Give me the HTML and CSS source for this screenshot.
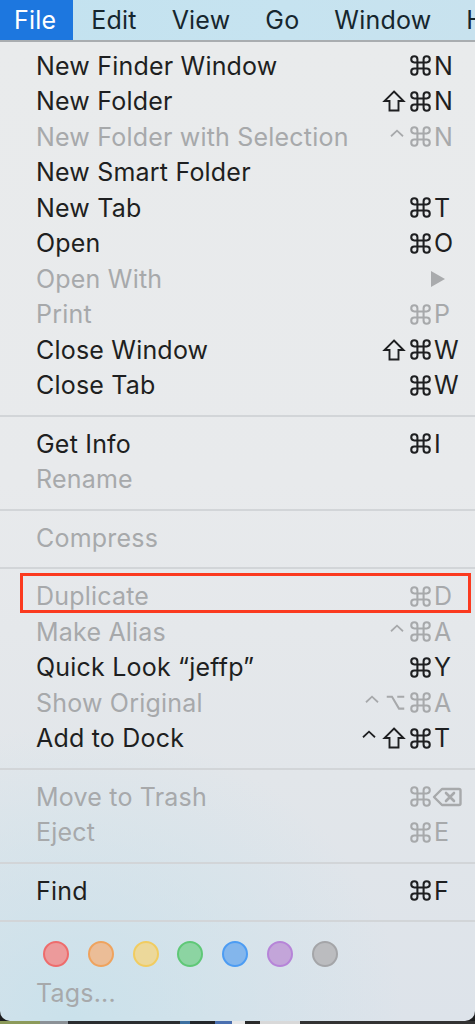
FILE: index.html
```html
<!DOCTYPE html>
<html lang="en">
<head>
<meta charset="utf-8">
<title>File menu</title>
<link rel="stylesheet" href="styles.css">
</head>
<body>
<svg class="defs" width="0" height="0" aria-hidden="true">
  <defs>
    <symbol id="cmd" viewBox="1.8 1.8 20.4 20.4"><path d="M15 6v12a3 3 0 1 0 3-3H6a3 3 0 1 0 3 3V6a3 3 0 1 0-3 3h12a3 3 0 1 0-3-3" fill="none" stroke="currentColor" stroke-width="2"/></symbol>
    <symbol id="shift" viewBox="0 0 24 24"><path d="M12 2.5 L21.5 12 H16.5 V21.5 H7.5 V12 H2.5 Z" fill="none" stroke="currentColor" stroke-width="1.9" stroke-linejoin="miter"/></symbol>
    <symbol id="ctrl" viewBox="0 0 24 24"><path d="M4 11 L12 3.5 L20 11" fill="none" stroke="currentColor" stroke-width="2.3"/></symbol>
    <symbol id="opt" viewBox="0 0 24 24"><path d="M2 5.5 H8 L16 19 H22 M14 5.5 H22" fill="none" stroke="currentColor" stroke-width="2.3"/></symbol>
  </defs>
</svg>
<div class="screen">
  <header class="menubar">
    <span class="mb-item active">File</span>
    <span class="mb-item">Edit</span>
    <span class="mb-item">View</span>
    <span class="mb-item">Go</span>
    <span class="mb-item">Window</span>
    <span class="mb-item">Help</span>
  </header>
  <div class="menu">
    <div class="row"><span class="label">New Finder Window</span><span class="mods"><svg class="m"><use href="#cmd"/></svg></span><span class="key">N</span></div>
    <div class="row"><span class="label">New Folder</span><span class="mods"><svg class="m s"><use href="#shift"/></svg><svg class="m"><use href="#cmd"/></svg></span><span class="key">N</span></div>
    <div class="row off"><span class="label">New Folder with Selection</span><span class="mods"><svg class="m c"><use href="#ctrl"/></svg><svg class="m"><use href="#cmd"/></svg></span><span class="key">N</span></div>
    <div class="row"><span class="label">New Smart Folder</span><span class="mods"></span><span class="key"></span></div>
    <div class="row"><span class="label">New Tab</span><span class="mods"><svg class="m"><use href="#cmd"/></svg></span><span class="key">T</span></div>
    <div class="row"><span class="label">Open</span><span class="mods"><svg class="m"><use href="#cmd"/></svg></span><span class="key">O</span></div>
    <div class="row off"><span class="label">Open With</span><span class="mods"></span><span class="key"><svg class="arrow" viewBox="0 0 16 18" width="16" height="18"><path d="M1 1 L15 9 L1 17 Z" fill="currentColor"/></svg></span></div>
    <div class="row off"><span class="label">Print</span><span class="mods"><svg class="m"><use href="#cmd"/></svg></span><span class="key">P</span></div>
    <div class="row"><span class="label">Close Window</span><span class="mods"><svg class="m s"><use href="#shift"/></svg><svg class="m"><use href="#cmd"/></svg></span><span class="key">W</span></div>
    <div class="row"><span class="label">Close Tab</span><span class="mods"><svg class="m"><use href="#cmd"/></svg></span><span class="key">W</span></div>
    <div class="sep"></div>
    <div class="row"><span class="label">Get Info</span><span class="mods"><svg class="m"><use href="#cmd"/></svg></span><span class="key">I</span></div>
    <div class="row off"><span class="label">Rename</span><span class="mods"></span><span class="key"></span></div>
    <div class="sep"></div>
    <div class="row off"><span class="label">Compress</span><span class="mods"></span><span class="key"></span></div>
    <div class="sep"></div>
    <div class="row off marked"><span class="label">Duplicate</span><span class="mods"><svg class="m"><use href="#cmd"/></svg></span><span class="key">D</span><span class="highlight-box"></span></div>
    <div class="row off"><span class="label">Make Alias</span><span class="mods"><svg class="m c"><use href="#ctrl"/></svg><svg class="m"><use href="#cmd"/></svg></span><span class="key">A</span></div>
    <div class="row"><span class="label">Quick Look “jeffp”</span><span class="mods"><svg class="m"><use href="#cmd"/></svg></span><span class="key">Y</span></div>
    <div class="row off"><span class="label">Show Original</span><span class="mods"><svg class="m c"><use href="#ctrl"/></svg><svg class="m"><use href="#opt"/></svg><svg class="m"><use href="#cmd"/></svg></span><span class="key">A</span></div>
    <div class="row"><span class="label">Add to Dock</span><span class="mods"><svg class="m c"><use href="#ctrl"/></svg><svg class="m s"><use href="#shift"/></svg><svg class="m"><use href="#cmd"/></svg></span><span class="key">T</span></div>
    <div class="sep"></div>
    <div class="row off"><span class="label">Move to Trash</span><span class="mods"><svg class="m"><use href="#cmd"/></svg></span><span class="key"><svg class="del" viewBox="0 0 30 20" width="30" height="20"><path d="M10 2 H27 a1.5 1.5 0 0 1 1.5 1.5 V16.5 a1.5 1.5 0 0 1 -1.5 1.5 H10 L2 10 Z" fill="none" stroke="currentColor" stroke-width="2.4" stroke-linejoin="round"/><path d="M14 6 L22 14 M22 6 L14 14" stroke="currentColor" stroke-width="2.6" stroke-linecap="round"/></svg></span></div>
    <div class="row off"><span class="label">Eject</span><span class="mods"><svg class="m"><use href="#cmd"/></svg></span><span class="key">E</span></div>
    <div class="sep"></div>
    <div class="row"><span class="label">Find</span><span class="mods"><svg class="m"><use href="#cmd"/></svg></span><span class="key">F</span></div>
    <div class="sep"></div>
    <div class="tags">
      <span class="dot red"></span>
      <span class="dot orange"></span>
      <span class="dot yellow"></span>
      <span class="dot green"></span>
      <span class="dot blue"></span>
      <span class="dot purple"></span>
      <span class="dot gray"></span>
    </div>
    <div class="row off"><span class="label">Tags...</span><span class="mods"></span><span class="key"></span></div>
  </div>
  <div class="desktop"></div>
</div>
</body>
</html>
```
FILE: styles.css
```css
* { box-sizing: border-box; }
html, body {
  margin: 0;
  padding: 0;
  width: 475px;
  height: 1024px;
  overflow: hidden;
  background: #1c1d1f;
}
body {
  font-family: "Inter", "DejaVu Sans", sans-serif;
  font-size: 25px;
  letter-spacing: 0.2px;
  color: #1e1f21;
}
.defs { position: absolute; width: 0; height: 0; }
.screen {
  display: flex;
  flex-direction: column;
  width: 475px;
  height: 1024px;
}
.menubar {
  display: flex;
  height: 42px;
  flex: 0 0 42px;
  background: linear-gradient(to right, #c3e2ef, #c6e3f0 60%, #c8e2ee);
  border-bottom: 2px solid #a9adb0;
  white-space: nowrap;
  overflow: hidden;
}
.mb-item {
  display: flex;
  align-items: center;
  padding: 0 17px 0 18px;
  color: #16262e;
  height: 40px;
  flex: 0 0 auto;
}
.mb-item.active {
  background: #1d77df;
  color: #ffffff;
  padding: 0 17px 0 14px;
}
.menu {
  flex: 0 0 auto;
  padding: 6px 0;
  height: 979px;
  border-radius: 0 0 10px 10px;
  background:
    radial-gradient(ellipse 70% 30% at 15% 100%, rgba(200,225,235,0.9), rgba(200,225,235,0) 100%),
    linear-gradient(to bottom, #e9ebec 0%, #e8eaec 45%, #e2e6ea 75%, #dde3ea 100%);
}
.row {
  position: relative;
  display: grid;
  grid-template-columns: 1fr auto 36px;
  align-items: center;
  height: 35.5px;
  padding-left: 36px;
  padding-right: 5px;
  white-space: nowrap;
}
.row.off { color: #a7a9ab; }
.mods {
  display: flex;
  justify-content: flex-end;
  align-items: center;
  gap: 4px;
  padding-right: 3px;
}
.m {
  display: block;
  width: 21px;
  height: 21px;
}
.m.s { width: 24px; height: 24px; }
.m.c { width: 18px; height: 22px; }
.key {
  display: flex;
  align-items: center;
}
.arrow { display: block; color: #a9abad; margin-left: -4px; }
.del { display: block; margin-left: -2px; }
.sep {
  height: 23px;
  display: flex;
  align-items: center;
  padding-top: 2px;
}
.sep::before {
  content: "";
  display: block;
  width: 100%;
  height: 2px;
  background: #d2d5d8;
}
.highlight-box {
  position: absolute;
  left: 20px;
  right: 4px;
  top: -6px;
  height: 40px;
  border: 3px solid #fb3a1f;
}
.tags {
  display: flex;
  align-items: center;
  gap: 18.8px;
  height: 44px;
  padding-left: 43px;
}
.dot {
  width: 26px;
  height: 26px;
  border-radius: 50%;
  border: 2px solid;
}
.red { background: #ec9a9b; border-color: #ee6c6c; }
.orange { background: #ebbd97; border-color: #efa35e; }
.yellow { background: #ecd89a; border-color: #f1cc60; }
.green { background: #8cd4a2; border-color: #5fc877; }
.blue { background: #83b6ec; border-color: #4c9cf3; }
.purple { background: #c3a5d9; border-color: #b684d8; }
.gray { background: #bbbcbf; border-color: #a4a5a8; }
.desktop {
  flex: 1;
  background: linear-gradient(to right, #8c9a5a 0 40px, #8b9196 40px 68px, #2b2d30 68px 180px, #3b6fa0 180px 190px, #23262a 190px 215px, #4a6fb0 215px 232px, #e8e8e8 232px 245px, #2a2a2a 245px 260px, #d9d9d9 260px 300px, #333 300px);
}
```
